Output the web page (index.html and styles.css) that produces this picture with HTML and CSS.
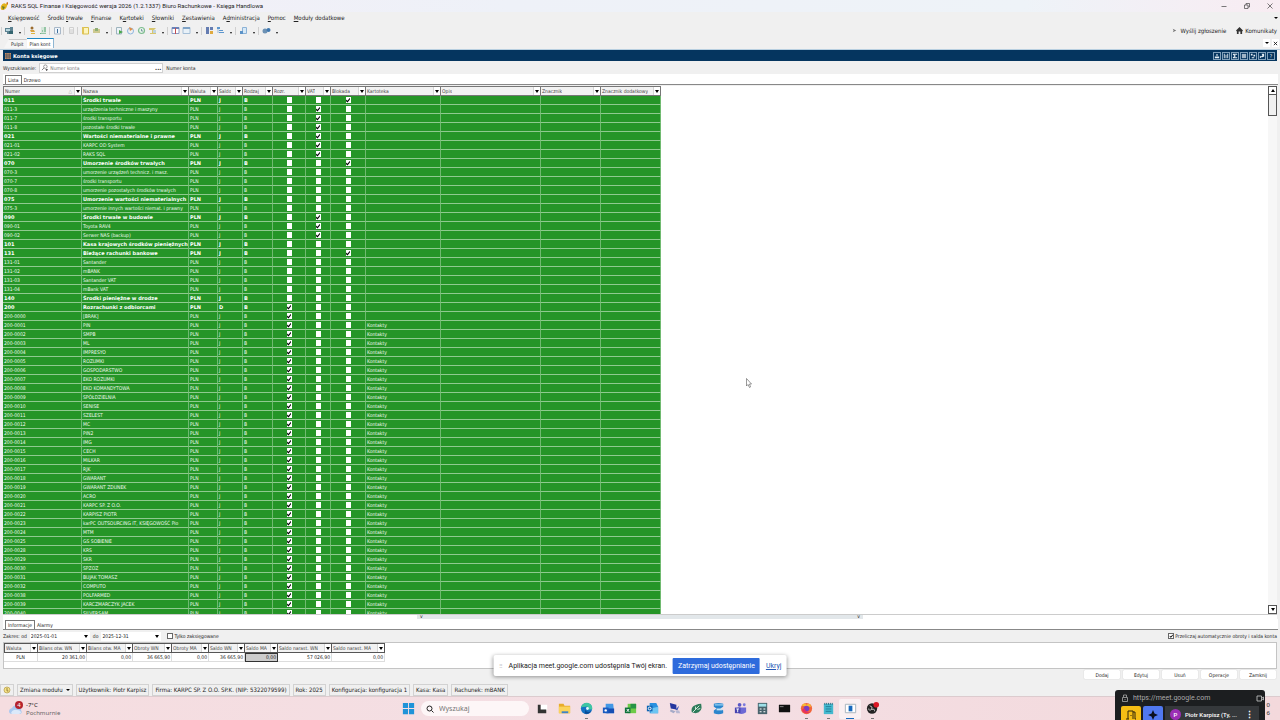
FILE: index.html
```html
<!DOCTYPE html>
<html lang="pl">
<head>
    <meta charset="UTF-8">
    <meta name="viewport" content="width=device-width, initial-scale=1.0">
    <title>RAKS SQL - Plan kont</title>
    <link rel="stylesheet" href="styles.css">
</head>
<body>
    <!-- Title bar -->
    <header class="titlebar">
        <svg class="app-icon" viewBox="0 0 9 9"><path d="M1 4 Q3 0 6 2 L8 1 L7 4 Q6 8 2 8 Q0 7 1 4Z" fill="#e2b21d"/><path d="M2 4 L5 5 L3 8Z" fill="#6b7a2a"/><path d="M6 1 L8 0 L8 3Z" fill="#c96d1b"/></svg>
        <span class="title">RAKS SQL Finanse i Księgowość wersja 2026 (1.2.1337) Biuro Rachunkowe - Księga Handlowa</span>
        <div class="window-buttons">
            <button aria-label="Minimalizuj"><svg viewBox="0 0 8 8"><path d="M1.500 4.500H6.500" stroke="#444" stroke-width=".7"/></svg></button>
            <button aria-label="Przywróć"><svg viewBox="0 0 8 8"><path d="M1.500 3H5V6.500H1.500ZM3 3V1.500H6.500V5H5" fill="none" stroke="#444" stroke-width=".7"/></svg></button>
            <button aria-label="Zamknij okno"><svg viewBox="0 0 8 8"><path d="M1.500 1.500L6.500 6.500M6.500 1.500L1.500 6.500" stroke="#444" stroke-width=".7"/></svg></button>
        </div>
    </header>

    <nav class="menu">
        <a href="#"><u>K</u>sięgowość</a>
        <a href="#">Środki <u>t</u>rwałe</a>
        <a href="#"><u>F</u>inanse</a>
        <a href="#">K<u>a</u>rtoteki</a>
        <a href="#"><u>S</u>łowniki</a>
        <a href="#"><u>Z</u>estawienia</a>
        <a href="#">A<u>d</u>ministracja</a>
        <a href="#"><u>P</u>omoc</a>
        <a href="#"><u>M</u>oduły dodatkowe</a>
        <span class="menu-more caret small"></span>
    </nav>

    <!-- Toolbar -->
    <div class="toolbar">
        <span class="sep"></span>
        <button aria-label="Moduł"><svg viewBox="0 0 9 9"><path d="M0 2H5V1H8V8H2V6H0Z" fill="#5d8291"/><path d="M1 3H5V5H1Z" fill="#b9d7df"/><path d="M4 5H8V8H4Z" fill="#34656f"/></svg></button>
        <span class="drop"></span><span class="sep"></span>
        <button aria-label="Kontrahent"><svg viewBox="0 0 9 9"><circle cx="4" cy="2" r="1.500" fill="#9b6b2d"/><path d="M2 4L6 4L7 6L3 6Z" fill="#d9a441"/><path d="M3 7H7V8H3Z" fill="#e0b43c"/></svg></button>
        <button aria-label="Wykres"><svg viewBox="0 0 9 9"><path d="M1 7H7V8H1ZM5 1H7V6H5ZM3 4H4V6H3Z" fill="#6fae86"/><path d="M2 1H7V8H2Z" fill="#b9dcc4" opacity=".5"/></svg></button>
        <span class="sep"></span>
        <button aria-label="Dokument"><svg viewBox="0 0 9 9"><path d="M1.500 1.500H7.500V8H1.500Z" fill="#eef4fa" stroke="#a9b8c8"/><path d="M4 3H5V7H4Z" fill="#3f6f9c"/></svg></button>
        <span class="sep"></span>
        <button aria-label="Kopiuj"><svg viewBox="0 0 9 9"><path d="M2.500 1.500H6.500V7.500H2.500Z" fill="#f4f4f4" stroke="#cfcfcf"/><path d="M3 4H6M3 6H6" stroke="#ccc"/></svg></button>
        <span class="sep"></span>
        <button aria-label="Notatka"><svg viewBox="0 0 9 9"><path d="M1.500 1.500H7.500V8H1.500Z" fill="#fdf5bd" stroke="#d9bf4e"/><path d="M1 1H3V8H1Z" fill="#e0c458"/></svg></button>
        <button aria-label="Rejestr"><svg viewBox="0 0 9 9"><path d="M1 3H8V7H1Z" fill="#cdc98f"/><path d="M3 2H6V5H3Z" fill="#8fae76"/></svg></button>
        <span class="drop"></span><span class="sep"></span>
        <button aria-label="Nowy"><svg viewBox="0 0 9 9"><path d="M1.500 1.500H6.500V8H1.500Z" fill="#edf3f8" stroke="#9db3bd"/><path d="M4 4L8 6L4 8Z" fill="#4aa84c"/></svg></button>
        <button aria-label="Odśwież"><svg viewBox="0 0 9 9"><circle cx="4.500" cy="5" r="3" fill="none" stroke="#8fb6e0"/><path d="M3 1L7 3L4 5Z" fill="#e18f44"/></svg></button>
        <button aria-label="Zegar"><svg viewBox="0 0 9 9"><circle cx="4.500" cy="4.500" r="3" fill="#e6f3ea" stroke="#7fbd90" stroke-width="1.200"/><path d="M4.500 3V5H6" fill="none" stroke="#578" stroke-width=".7"/></svg></button>
        <button aria-label="Waga"><svg viewBox="0 0 9 9"><path d="M1 2H8L6 4V7H8V8H2V7H4V4H1Z" fill="#d8c66d"/><path d="M5 4H8V7H5Z" fill="#bcd2df"/></svg></button>
        <span class="drop"></span><span class="sep"></span>
        <button aria-label="Tabela"><svg viewBox="0 0 9 9"><path d="M1 1.500H8V7.500H1Z" fill="#fff" stroke="#8b9dc6"/><path d="M1 1H8V3H1Z" fill="#6b82b8"/><path d="M4.500 2V8" stroke="#c44d50"/></svg></button>
        <button aria-label="Okno"><svg viewBox="0 0 9 9"><path d="M1 1.500H8V7.500H1Z" fill="#e8f1f8" stroke="#a5bfd7"/><path d="M1 1H8V3H1Z" fill="#7fa3c7"/></svg></button>
        <span class="drop"></span><span class="sep"></span>
        <button aria-label="Salda"><svg viewBox="0 0 9 9"><path d="M1 1H4V8H1ZM5 1H8V4H5Z" fill="#647cb1"/><path d="M5 5H8V8H5Z" fill="#e0aa3e"/></svg></button>
        <button aria-label="Drzewo kont"><svg viewBox="0 0 9 9"><path d="M1 1H4V3H1ZM3 4H7V5H3ZM3 6H8V7H3Z" fill="#5d96cd"/><path d="M2 3V7" stroke="#9bbbd8"/></svg></button>
        <span class="drop"></span><span class="sep"></span>
        <button aria-label="Wydruk"><svg viewBox="0 0 9 9"><path d="M3.500 1.500H7.500V7.500H3.500Z" fill="#d7e9f7" stroke="#8cb2d6"/><path d="M1 5H4V8H1Z" fill="#5b93c8"/></svg></button>
        <span class="drop"></span><span class="sep"></span>
        <button aria-label="Pomoc"><svg viewBox="0 0 9 9"><circle cx="3" cy="5" r="2.500" fill="#6d92b4"/><circle cx="6.500" cy="4" r="2" fill="#3f78b0"/></svg></button>
        <span class="drop"></span>
        <div class="toolbar-right">
            <a href="#"><svg viewBox="0 0 8 8"><path d="M2 2L6 4L2 6L3 4Z" fill="#777"/></svg>Wyślij zgłoszenie</a>
            <a href="#"><svg viewBox="0 0 8 8"><path d="M0 4L4 0L8 4L7 5V8H5V5H3V8H1V5Z" fill="#333"/></svg>Komunikaty</a>
        </div>
    </div>

    <div class="doc-tabs">
        <button class="doc-tab">Pulpit</button>
        <button class="doc-tab active">Plan kont</button>
        <div class="doc-controls">
            <button aria-label="Lista kart"><span class="caret small"></span></button>
            <button aria-label="Zamknij kartę"><svg viewBox="0 0 6 6"><path d="M1 1L5 5M5 1L1 5" stroke="#111"/></svg></button>
        </div>
    </div>

    <main class="window">
        <div class="window-header">
            <svg class="grid-icon" viewBox="0 0 7 7"><path d="M0 0H2V2H0ZM2.500 0H4.500V2H2.500ZM5 0H7V2H5ZM0 2.500H2V4.500H0ZM2.500 2.500H4.500V4.500H2.500ZM5 2.500H7V4.500H5ZM0 5H2V7H0ZM2.500 5H4.500V7H2.500ZM5 5H7V7H5Z" fill="#c98d62"/></svg>
            <h1>Konta księgowe</h1>
            <div class="header-tools">
                <button aria-label="Drukuj"><svg viewBox="0 0 7 7"><path d="M1 4H6V6H1ZM2 3L3.500 1L5 3Z"/></svg></button>
                <button aria-label="Kolumny"><svg viewBox="0 0 7 7"><path d="M1 1H2V6H1ZM3 2H4V6H3ZM5 1H6V6H5Z"/></svg></button>
                <button aria-label="Suma"><svg viewBox="0 0 7 7"><path d="M1 1H6V2H3L4.500 3.500L3 5H6V6H1V5L3 3.500L1 2Z"/></svg></button>
                <button aria-label="Siatka"><svg viewBox="0 0 7 7"><path d="M1 1H6V6H1Z" opacity=".7"/></svg></button>
                <button aria-label="Odśwież listę"><svg viewBox="0 0 7 7"><path d="M1 1H3V3H1ZM4 2H6V4H4ZM2 5H5V6H2Z"/></svg></button>
                <button aria-label="Powiększ"><svg viewBox="0 0 7 7"><path d="M1 6V3L3 5ZM3 1H6V4L4 5L2 4L4 3Z"/></svg></button>
                <button aria-label="Pomoc okna">?</button>
            </div>
        </div>

        <div class="search-row">
            <label for="search">Wyszukiwanie:</label>
            <div class="search-box">
                <svg viewBox="0 0 8 8"><circle cx="5" cy="3" r="2" fill="none" stroke="#777" stroke-width=".8"/><path d="M3.500 4.500L1 7" stroke="#777"/><path d="M5 6H8L6.500 8Z" fill="#222"/></svg>
                <input type="text" id="search" placeholder="Numer konta">
                <button aria-label="Więcej">...</button>
            </div>
            <span>Numer konta</span>
        </div>

        <div class="view-tabs">
            <button class="view-tab active">Lista</button>
            <button class="view-tab">Drzewo</button>
        </div>

        <!-- Accounts list -->
        <div class="accounts">
            <div class="accounts-scroll">
                <table class="accounts-table">
                    <colgroup>
                        <col class="c-number"><col class="c-name"><col class="c-currency"><col class="c-balance">
                        <col class="c-kind"><col class="c-settle"><col class="c-vat"><col class="c-lock">
                        <col class="c-file"><col class="c-desc"><col class="c-tag"><col class="c-tag">
                    </colgroup>
                    <thead>
                        <tr id="accountsHead"></tr>
                    </thead>
                    <tbody id="accountsBody"></tbody>
                </table>
            </div>
            <div class="scrollbar">
                <button aria-label="W górę"><span class="caret up"></span></button>
                <span class="thumb"></span>
                <button class="down" aria-label="W dół"><span class="caret"></span></button>
            </div>
        </div>
        <div class="splitter"><span class="splitter-handle"><span>v</span><span>v</span></span></div>

        <div class="view-tabs info-tabs">
            <button class="view-tab active">Informacje</button>
            <button class="view-tab">Alarmy</button>
        </div>

        <div class="range-row">
            <label for="dateFrom">Zakres: od</label>
            <select id="dateFrom"><option>2025-01-01</option></select>
            <label for="dateTo">do</label>
            <select id="dateTo"><option>2025-12-31</option></select>
            <label class="check-label"><input type="checkbox" class="check">Tylko zaksięgowane</label>
            <label class="check-label recalc"><input type="checkbox" class="check" checked>Przeliczaj automatycznie obroty i salda konta</label>
        </div>

        <div class="totals">
            <table class="totals-table">
                <colgroup>
                    <col class="t-34"><col class="t-49"><col class="t-46"><col class="t-39"><col class="t-37">
                    <col class="t-36"><col class="t-33"><col class="t-54"><col class="t-53">
                </colgroup>
                <thead>
                    <tr id="totalsHead"></tr>
                </thead>
                <tbody>
                    <tr>
                        <td class="center">PLN</td><td>20 361,00</td><td>0,00</td><td>36 665,90</td><td>0,00</td>
                        <td>36 665,90</td><td class="selected">0,00</td><td>57 026,90</td><td>0,00</td>
                    </tr>
                </tbody>
            </table>
        </div>

        <div class="actions">
            <button>Dodaj</button>
            <button>Edytuj</button>
            <button>Usuń</button>
            <button>Operacje</button>
            <button>Zamknij</button>
        </div>
    </main>

    <footer class="statusbar">
        <button class="status-item" aria-label="Podpowiedź"><svg viewBox="0 0 8 8"><circle cx="4" cy="4" r="3" fill="#f6e388" stroke="#b39a45" stroke-width=".7"/><path d="M4 2V5H5.500" fill="none" stroke="#86702e" stroke-width=".8"/></svg></button>
        <button class="status-item">Zmiana modułu <span class="caret small"></span></button>
        <span class="status-item">Użytkownik: Piotr Karpisz</span>
        <span class="status-item">Firma: KARPC SP. Z O.O. SP.K. (NIP: 5322079599)</span>
        <span class="status-item">Rok: 2025</span>
        <span class="status-item">Konfiguracja: konfiguracja 1</span>
        <span class="status-item">Kasa: Kasa</span>
        <span class="status-item">Rachunek: mBANK</span>
    </footer>

    <!-- Windows taskbar -->
    <div class="taskbar">
        <div class="weather">
            <svg viewBox="0 0 16 14"><path d="M3 13Q0 13 0 10Q0 8 3 7Q5 3 9 5Q13 6 12 9Q14 13 10 13Z" fill="#a9c9f0"/><path d="M2 12Q4 8 8 9Q12 9 12 12L10 13H3Z" fill="#dbe9fa"/><circle cx="10" cy="4" r="4" fill="#b5222c"/><text x="10" y="6" text-anchor="middle" class="badge-text">4</text></svg>
            <div><div>-7°C</div><div class="muted">Pochmurnie</div></div>
        </div>
        <div class="task-icons">
            <button aria-label="Start"><svg viewBox="0 0 16 16"><path d="M2 2H7.500V7.500H2ZM8.500 2H14V7.500H8.500ZM2 8.500H7.500V14H2ZM8.500 8.500H14V14H8.500Z" fill="#1f93d8"/></svg></button>
            <div class="task-search">
                <svg viewBox="0 0 8 8"><circle cx="3.500" cy="3.500" r="2.500" fill="none" stroke="#222"/><path d="M5.500 5.500L7.500 7.500" stroke="#222"/></svg>
                <input type="text" aria-label="Wyszukaj" placeholder="Wyszukaj">
            </div>
            <button aria-label="Widok zadań"><svg viewBox="0 0 16 16"><path d="M6 4H13V10H6Z" fill="#fff"/><path d="M3 4H6V9H12V13H3Z" fill="#333"/></svg></button>
            <button aria-label="Pliki"><svg viewBox="0 0 16 16"><path d="M2 3H7L8 5H14V13H2Z" fill="#e8ac2b"/><path d="M2 6H14V13H2Z" fill="#fbd35b"/><path d="M5 11H12V13H5Z" fill="#3f83c8"/></svg></button>
            <button class="running" aria-label="Edge"><svg viewBox="0 0 16 16"><circle cx="8" cy="8" r="6" fill="#1572c4"/><path d="M2 7Q4 1 10 2Q15 4 14 9H9Q11 5 7 6Q4 6 2 7Z" fill="#3fc6a3"/><path d="M7 9Q8 13 13 11Q10 15 6 13Z" fill="#0a4a94"/><circle cx="9" cy="8" r="1.500" fill="#e7f6fa"/></svg></button>
            <button aria-label="Word"><svg viewBox="0 0 16 16"><path d="M5 3H13L14 13H5Z" fill="#4397e5"/><path d="M6 8H14V13H6Z" fill="#164fb4"/><path d="M2 7H8V13H2Z" fill="#1a5bc0"/><circle cx="5" cy="10" r="1.300" fill="#fff"/></svg></button>
            <button aria-label="Excel"><svg viewBox="0 0 16 16"><path d="M5 3H14V13H5Z" fill="#6ecb48"/><path d="M8 3H14V8H8Z" fill="#279447"/><path d="M2 7H8V13H2Z" fill="#0e713a"/><path d="M4 8.500L6.500 11.500M6.500 8.500L4 11.500" stroke="#fff"/></svg></button>
            <button aria-label="Outlook"><svg viewBox="0 0 16 16"><path d="M5 2H12L14 6V13H5Z" fill="#2990df"/><path d="M6 8L14 6V13H6Z" fill="#6cc5f2"/><path d="M2 5H8V11H2Z" fill="#0f64b2"/><circle cx="5" cy="8" r="1.500" fill="none" stroke="#fff"/></svg></button>
            <button aria-label="Zdalny pulpit"><svg viewBox="0 0 16 16"><path d="M3 2L10 4L10 9L4 8Z" fill="#24369f"/><path d="M4 9L9 11L7 13L3 11Z" fill="#a6abc8"/><path d="M9 9L13 5L11 10Z" fill="#3c57b8"/><path d="M9 10L13 10L14 13L10 13Z" fill="#b9b9d2"/></svg></button>
            <button aria-label="KSeF"><svg viewBox="0 0 16 16"><path d="M3 12Q1 4 13 3Q15 12 7 13Z" fill="#2c7a59"/><path d="M4 12L11 5M7 9V6M9 9L12 8" stroke="#d8efe0"/></svg></button>
            <button aria-label="Baza"><svg viewBox="0 0 16 16"><path d="M3 3Q8 1 13 3V6L10 8L13 10V13Q8 15 3 13V10L6 8L3 6Z" fill="#2c86cd"/><path d="M4 3H13V5H4Z" fill="#79bde9"/><path d="M6 8H12V10H6Z" fill="#c7e4f5"/></svg></button>
            <button aria-label="Teams"><svg viewBox="0 0 16 16"><circle cx="7" cy="4" r="2" fill="#5a58c7"/><circle cx="12" cy="4" r="1.500" fill="#7b79dc"/><path d="M5 7H14V12Q10 15 6 13Z" fill="#6d69d5"/><path d="M2 7H8V13H2Z" fill="#4744b0"/><path d="M3.500 8.500H6.500M5 8.500V12" stroke="#fff"/></svg></button>
            <button aria-label="Kalkulator"><svg viewBox="0 0 16 16"><path d="M3 2H13V14H3Z" fill="#49646d"/><path d="M4 3H12V6H4Z" fill="#9fe0e8"/><path d="M5 8H7V9H5ZM9 8H11V9H9ZM5 11H7V12H5ZM9 11H11V12H9Z" fill="#fff"/></svg></button>
            <button aria-label="Terminal"><svg viewBox="0 0 16 16"><path d="M2 4H14V12H2Z" fill="#111"/><path d="M3 6H7" stroke="#888"/></svg></button>
            <button class="running" aria-label="Firefox"><svg viewBox="0 0 16 16"><circle cx="8" cy="8" r="6" fill="#f2653a"/><path d="M3 5Q5 1 8 4Q12 1 13 6L9 6Z" fill="#f7b733"/><circle cx="8" cy="8" r="3" fill="#7a3ec0"/><path d="M3 9Q5 15 12 12Q7 12 6 8Z" fill="#e7305f"/></svg></button>
            <button class="running" aria-label="Notatnik"><svg viewBox="0 0 16 16"><path d="M3 3H13V14H3Z" fill="#45b9cf"/><path d="M4 2V4M6 2V4M8 2V4M10 2V4M12 2V4" stroke="#2e6f85"/><path d="M5 6H11M5 8.500H11M5 11H11" stroke="#217f97"/></svg></button>
            <button class="running current" aria-label="RAKS"><svg viewBox="0 0 16 16"><path d="M2.500 3.500H13.500V12.500H2.500Z" fill="#fff" stroke="#a5b2bc"/><path d="M6 5H10V11H6Z" fill="#1769bd"/></svg></button>
            <button class="running" aria-label="OBS"><svg viewBox="0 0 16 16"><circle cx="7.500" cy="8" r="5.500" fill="#222"/><path d="M5 5Q9 6 7 9M7 9Q11 8 10 11M7 9Q4 11 4 8" fill="none" stroke="#ccc"/><circle cx="12" cy="4" r="3" fill="#da1725"/></svg></button>
        </div>
        <div class="clock"><div>0</div><div>6</div></div>
    </div>

    <!-- Screen sharing notice -->
    <div class="share-notice">
        <span class="grip">⠿</span>
        <span>Aplikacja meet.google.com udostępnia Twój ekran.</span>
        <button>Zatrzymaj udostępnianie</button>
        <a href="#">Ukryj</a>
    </div>

    <!-- Meet mini window -->
    <div class="meet">
        <div class="meet-url">
            <svg viewBox="0 0 8 8"><path d="M1.500 3.500H6.500V7.500H1.500ZM2.500 3V1H5.500V3M4 5V6" fill="none" stroke="#aaa" stroke-width=".8"/></svg>
            <span>https://meet.google.com</span>
            <svg viewBox="0 0 8 8"><path d="M1 2H5.500V7H1ZM6 4L7.500 3V6L6 5" fill="none" stroke="#ccc" stroke-width=".8"/></svg>
        </div>
        <div class="meet-body">
            <button class="leave" aria-label="Wyjdź"><svg viewBox="0 0 12 12"><path d="M3 10V2H8V10M1 10H4M8 3H10V10H11M6 6V7" fill="none" stroke="#30270a"/></svg></button>
            <button class="gemini" aria-label="Gemini"><svg viewBox="0 0 12 12"><path d="M6 1L7.500 4.500L11 6L7.500 7.500L6 11L4.500 7.500L1 6L4.500 4.500Z" fill="#0b1020"/></svg></button>
            <div class="person"><span class="avatar">P</span><span>Piotr Karpisz (Ty, ...</span><span class="dots">⋮</span></div>
        </div>
    </div>

    <svg class="cursor" viewBox="0 0 6 10"><path d="M.5 .5V8L2 6.500L3.500 9.500L4.500 9L3.500 6H5.500Z" fill="#fff" stroke="#555" stroke-width=".6"/></svg>

    <script src="script.js"></script>
</body>
</html>
```

FILE: styles.css
```css
* {
    box-sizing: border-box;
}
body {
    display: flex;
    flex-direction: column;
    height: 100vh;
    margin: 0;
    overflow: hidden;
    position: relative;
    background: #f0f0f0;
    color: #222;
    font-family: "DejaVu Sans Condensed", "DejaVu Sans", sans-serif;
    font-size: 5px;
    line-height: 8px;
}
button, input, select {
    margin: 0;
    padding: 0;
    border: none;
    background: none;
    color: inherit;
    font: inherit;
}
a {
    color: inherit;
    text-decoration: none;
}
svg {
    display: block;
    flex: none;
}
.caret {
    display: inline-block;
    border: 2px solid transparent;
    border-top: 3px solid #000;
    border-bottom: 0;
}
.caret.up {
    border-top: 0;
    border-bottom: 3px solid #000;
}
.caret.small {
    border-width: 2px 2px 0;
}

/* Title bar */
.titlebar {
    display: flex;
    align-items: center;
    height: 12px;
    padding: 0 6px 0 0;
    background: linear-gradient(90deg, #f3eff7, #eef1f8 40%, #eef3f8 80%, #f8ecf2);
    font-family: Roboto, sans-serif;
    font-size: 6px;
}
.app-icon {
    width: 9px;
    height: 9px;
    margin: 0 2px 0 0;
}
.window-buttons {
    display: flex;
    gap: 15px;
    margin-left: auto;
}
.window-buttons svg {
    width: 8px;
    height: 8px;
}

/* Menu and toolbar */
.menu {
    display: flex;
    align-items: center;
    gap: 8px;
    height: 12px;
    padding: 0 2px 0 8px;
    font-size: 6px;
}
.menu-more {
    margin-left: auto;
}
.toolbar {
    display: flex;
    align-items: center;
    height: 13px;
    padding-left: 1px;
}
.toolbar > button {
    width: 11px;
}
.toolbar > button svg {
    width: 9px;
    height: 9px;
    margin: auto;
}
.sep {
    width: 3px;
    height: 8px;
    border-left: 1px solid #cfcfcf;
}
.drop {
    width: 9px;
    height: 6px;
    display: flex;
    align-items: end;
    justify-content: center;
}
.drop::after {
    content: "";
    border: 1px solid transparent;
    border-top: 2px solid #111;
    border-bottom: 0;
}
.toolbar-right {
    display: flex;
    gap: 10px;
    margin-left: auto;
    padding-right: 3px;
    font-size: 6px;
}
.toolbar-right a {
    display: flex;
    align-items: center;
    gap: 2px;
}
.toolbar-right svg {
    width: 7px;
    height: 7px;
}

/* Document tabs */
.doc-tabs {
    display: flex;
    align-items: end;
    height: 13px;
    padding: 0 0 1px 4px;
    border-bottom: 1px solid #b8cfe0;
}
.doc-tab {
    height: 9px;
    padding: 0 3px 0 7px;
    border-top: 1px solid #c8c8c8;
    background: #f6f6f6;
    clip-path: polygon(5px 0, 100% 0, 100% 100%, 0 100%);
}
.doc-tab.active {
    height: 10px;
    padding: 0 3px 0 3px;
    border-top: 1px solid #1e87c4;
    border-right: 1px solid #8fb6d2;
    background: #fff;
    clip-path: none;
}
.doc-controls {
    display: flex;
    gap: 2px;
    margin: 0 1px 1px auto;
}
.doc-controls button {
    display: flex;
    align-items: center;
    justify-content: center;
    width: 7px;
    height: 8px;
    background: #fff;
}
.doc-controls svg {
    width: 5px;
    height: 5px;
}

/* Window */
.window {
    display: flex;
    flex: 1;
    flex-direction: column;
    min-height: 0;
    padding: 0 3px;
}
.window-header {
    display: flex;
    align-items: center;
    flex: none;
    gap: 2px;
    height: 11px;
    padding: 0 2px;
    background: #05355f;
    color: #fff;
}
.grid-icon {
    width: 6px;
    height: 6px;
}
h1 {
    margin: 0;
    font-family: "DejaVu Sans", sans-serif;
    font-size: 5px;
    line-height: 8px;
}
.header-tools {
    display: flex;
    gap: 1px;
    margin-left: auto;
}
.header-tools button {
    display: flex;
    align-items: center;
    justify-content: center;
    width: 8px;
    height: 8px;
    border: 1px solid #7f9fba;
    line-height: 6px;
}
.header-tools svg {
    width: 6px;
    height: 6px;
    fill: #e4edf4;
}
.search-row {
    display: flex;
    align-items: center;
    flex: none;
    gap: 3px;
    height: 13px;
}
.search-box {
    display: flex;
    align-items: center;
    width: 124px;
    height: 10px;
    padding: 0 1px;
    border: 1px solid #d0d0d0;
    background: #fff;
}
.search-box svg {
    width: 7px;
    height: 7px;
    margin-right: 2px;
}
.search-box input {
    flex: 1;
    min-width: 0;
}
.search-box input::placeholder {
    color: #777;
}
.search-box button {
    font-size: 6px;
    font-weight: bold;
    line-height: 6px;
}
.view-tabs {
    display: flex;
    align-items: end;
    flex: none;
    height: 11px;
    margin-right: -1px;
    padding-left: 2px;
    border-bottom: 1px solid #888;
    background: #fff;
}
.view-tab {
    height: 9px;
    padding: 0 2px;
}
.view-tab.active {
    border: 1px solid #777;
    border-bottom: 0;
    line-height: 8px;
}

/* Accounts list */
.accounts {
    display: flex;
    flex: 1;
    min-height: 0;
    margin-top: 1px;
    background: #fff;
}
.accounts-scroll {
    flex: 1;
    overflow: hidden;
}
table {
    border-collapse: separate;
    border-spacing: 0;
    table-layout: fixed;
}
.accounts-table {
    width: 658px;
}
.c-number { width: 79px; }
.c-name { width: 107px; }
.c-currency { width: 29px; }
.c-balance { width: 25px; }
.c-kind { width: 30px; }
.c-settle { width: 33px; }
.c-vat { width: 25px; }
.c-lock { width: 35px; }
.c-file { width: 75px; }
.c-desc { width: 100px; }
.c-tag { width: 60px; }
th, td {
    overflow: hidden;
    padding: 0 0 0 1px;
    white-space: nowrap;
    text-align: left;
}
th {
    height: 10px;
    border: 1px solid #777;
    border-left: 0;
    background: #f2f2f2;
    color: #444;
    font-weight: normal;
}
th:first-child {
    border-left: 1px solid #777;
}
.th-inner {
    display: flex;
    align-items: center;
    justify-content: space-between;
}
.th-inner .label {
    overflow: hidden;
}
.filter {
    display: flex;
    align-items: center;
    justify-content: center;
    flex: none;
    width: 7px;
    height: 8px;
    border-left: 1px solid #d5d5d5;
    background: #fff;
}
.sort {
    margin-left: auto;
    padding-right: 2px;
    color: #999;
}
.accounts-table td {
    height: 9px;
    border-right: 1px solid #6fba6f;
    border-bottom: 1px solid #8fca8f;
    background: #259527;
    color: #f0faf0;
    line-height: 8px;
}
.accounts-table .bold td {
    color: #fff;
    font-family: "DejaVu Sans", sans-serif;
    font-weight: bold;
}
.check {
    display: block;
    width: 6px;
    height: 6px;
    appearance: none;
    background: #fff;
}
.accounts-table .check-cell {
    padding: 0;
}
.accounts-table .check {
    width: 5px;
    margin: 0 auto;
}
.check:checked::before {
    content: "";
    display: block;
    width: 100%;
    height: 100%;
    background: #000;
    clip-path: polygon(12% 42%, 40% 62%, 88% 12%, 88% 42%, 40% 92%, 12% 70%);
}
.scrollbar {
    display: flex;
    flex-direction: column;
    width: 9px;
    background: #f7f7f7;
}
.scrollbar button {
    display: flex;
    align-items: center;
    justify-content: center;
    height: 9px;
    border: 1px solid #555;
    background: #fff;
}
.thumb {
    height: 21px;
    border: 1px solid #555;
    border-top: 0;
    background: #f0f0f0;
}
.scrollbar .down {
    margin-top: auto;
}
.splitter {
    flex: none;
    height: 5px;
    border-top: 1px solid #ccc;
    background: #fff;
}
.splitter-handle {
    display: flex;
    justify-content: space-between;
    width: 446px;
    height: 4px;
    margin: 0 auto;
    padding: 0 3px;
    background: #e2e7ea;
    line-height: 3px;
}

/* Bottom panel */
.range-row {
    display: flex;
    align-items: center;
    flex: none;
    gap: 3px;
    height: 12px;
}
select {
    appearance: none;
    width: 60px;
    height: 9px;
    padding-left: 1px;
    background: #fff url("data:image/svg+xml,%3Csvg xmlns='http://www.w3.org/2000/svg' viewBox='0 0 4 3'%3E%3Cpath d='M0 0H4L2 3Z'/%3E%3C/svg%3E") no-repeat right 2px center / 4px 3px;
}
.check-label {
    display: flex;
    align-items: center;
    gap: 1px;
    margin-left: 3px;
}
.check-label .check {
    border: 1px solid #666;
}
.recalc {
    margin-left: auto;
}
.totals {
    flex: none;
    height: 27px;
    border: 1px solid #c4c4c4;
    background: #fff;
}
.totals-table {
    width: 381px;
}
.t-34 { width: 34px; }
.t-49 { width: 49px; }
.t-46 { width: 46px; }
.t-39 { width: 39px; }
.t-37 { width: 37px; }
.t-36 { width: 36px; }
.t-33 { width: 33px; }
.t-54 { width: 54px; }
.t-53 { width: 53px; }
.totals-table th {
    border-color: #555;
}
.totals-table td {
    padding-right: 1px;
    border-right: 1px solid #ddd;
    border-bottom: 1px solid #ddd;
    text-align: right;
}
.totals-table .center {
    text-align: center;
}
.totals-table .selected {
    border: 1px solid #333;
    background: #ccc;
    line-height: 7px;
}
.actions {
    display: flex;
    flex: none;
    justify-content: end;
    gap: 3px;
    height: 15px;
    padding: 1px 1px 0 0;
}
.actions button {
    width: 36px;
    height: 9px;
    border-radius: 1px;
    background: #fff;
    box-shadow: 0 0 1px #aaa;
}

/* Status bar */
.statusbar {
    display: flex;
    align-items: center;
    flex: none;
    gap: 3px;
    height: 12px;
    font-size: 6px;
}
.status-item {
    display: flex;
    align-items: center;
    gap: 3px;
    height: 12px;
    padding: 0 2px;
    border: 1px solid #d2d2d2;
    white-space: nowrap;
}
.status-item svg {
    width: 8px;
    height: 8px;
}

/* Taskbar */
.taskbar {
    display: grid;
    grid-template-columns: 1fr auto 1fr;
    align-items: center;
    flex: none;
    height: 24px;
    border-top: 1px solid #dccbce;
    background: linear-gradient(90deg, #f5dde0, #f4dfe4 50%, #f3d9dc);
    font-family: "Noto Sans", sans-serif;
    font-size: 6px;
}
.weather {
    display: flex;
    gap: 1px;
    padding-left: 9px;
}
.weather svg {
    width: 16px;
    height: 14px;
}
.badge-text {
    fill: #fff;
    font-size: 6px;
}
.muted {
    color: #666;
}
.task-icons {
    display: flex;
    align-items: center;
}
.task-icons button {
    display: flex;
    align-items: center;
    justify-content: center;
    width: 22px;
    height: 20px;
    position: relative;
}
.task-icons button svg {
    width: 15px;
    height: 15px;
}
.task-search {
    display: flex;
    align-items: center;
    gap: 5px;
    width: 108px;
    height: 15px;
    margin: 0 2px;
    padding: 0 5px;
    border-radius: 8px;
    background: #fdf6f7;
    font-size: 7px;
}
.task-search svg {
    width: 8px;
    height: 8px;
}
.task-search input {
    flex: 1;
    min-width: 0;
}
.running::after {
    content: "";
    position: absolute;
    bottom: 0;
    width: 3px;
    height: 1px;
    background: #777;
}
.task-icons .current {
    border-radius: 2px;
    background: #faf0f2;
}
.current::after {
    width: 8px;
    background: #1769bd;
}
.clock {
    padding-right: 10px;
    text-align: right;
}

/* Overlays */
.share-notice {
    display: flex;
    align-items: center;
    gap: 6px;
    position: absolute;
    bottom: 44px;
    left: 50%;
    height: 21px;
    padding: 0 5px;
    border-radius: 2px;
    background: #fff;
    box-shadow: 0 1px 4px rgba(0, 0, 0, 0.4);
    font-family: Roboto, sans-serif;
    font-size: 7px;
    white-space: nowrap;
    transform: translateX(-50%);
}
.share-notice button {
    height: 16px;
    padding: 0 5px;
    border-radius: 1px;
    background: #2e6bdc;
    color: #fff;
}
.share-notice a {
    color: #2459b5;
    text-decoration: underline;
}
.grip {
    color: #bbb;
    font-size: 5px;
}
.meet {
    position: absolute;
    right: 15px;
    bottom: 0;
    width: 150px;
    height: 30px;
    overflow: hidden;
    border-radius: 3px 3px 0 0;
    background: #1c1e20;
    color: #fff;
    font-family: Roboto, sans-serif;
    font-size: 7px;
}
.meet-url {
    display: flex;
    align-items: center;
    gap: 4px;
    height: 16px;
    padding: 0 1px 0 6px;
    color: #aaa;
}
.meet-url svg {
    width: 8px;
    height: 8px;
}
.meet-url span {
    flex: 1;
}
.meet-body {
    display: flex;
    gap: 2px;
    padding: 0 6px;
}
.meet-body button {
    width: 20px;
    height: 18px;
    border-radius: 2px;
}
.meet-body svg {
    width: 12px;
    height: 12px;
    margin: 0 auto;
}
.leave {
    background: #f5bd14;
}
.gemini {
    background: #5078f0;
}
.person {
    display: flex;
    align-items: center;
    gap: 4px;
    flex: 1;
    height: 17px;
    padding: 0 5px;
    background: #35383b;
    font-size: 6px;
    font-weight: 500;
    white-space: nowrap;
}
.avatar {
    width: 11px;
    height: 11px;
    border-radius: 50%;
    background: #9c2fb5;
    line-height: 11px;
    text-align: center;
}
.dots {
    margin-left: auto;
    font-size: 9px;
    font-weight: bold;
}
.cursor {
    position: absolute;
    top: 378px;
    left: 746px;
    width: 6px;
    height: 10px;
}
```

FILE: script.js
```js
const headers = ['Numer', 'Nazwa', 'Waluta', 'Saldo', 'Rodzaj', 'Rozr.', 'VAT', 'Blokada', 'Kartoteka', 'Opis', 'Znacznik', 'Znacznik dodatkowy'];
const totalHeaders = ['Waluta', 'Bilans otw. WN', 'Bilans otw. MA', 'Obroty WN', 'Obroty MA', 'Saldo WN', 'Saldo MA', 'Saldo narast. WN', 'Saldo narast. MA'];

// number, name, flags: b = bold, r = Rozr., v = VAT, l = Blokada, k = Kontakty
const accounts = [
    ['011', 'Środki trwałe', 'bl'],
    ['011-3', 'urządzenia techniczne i maszyny', 'v'],
    ['011-7', 'środki transportu', 'v'],
    ['011-8', 'pozostałe środki trwałe', 'v'],
    ['021', 'Wartości niematerialne i prawne', 'bv'],
    ['021-01', 'KARPC OD System', 'v'],
    ['021-02', 'RAKS SQL', 'v'],
    ['070', 'Umorzenie środków trwałych', 'bl'],
    ['070-3', 'umorzenie urządzeń technicz. i masz.', ''],
    ['070-7', 'środki transportu', ''],
    ['070-8', 'umorzenie pozostałych środków trwałych', ''],
    ['075', 'Umorzenie wartości niematerialnych', 'b'],
    ['075-3', 'umorzenie innych wartości niemat. i prawny', ''],
    ['090', 'Środki trwałe w budowie', 'bv'],
    ['090-01', 'Toyota RAV4', 'v'],
    ['090-02', 'Serwer NAS (backup)', 'v'],
    ['101', 'Kasa krajowych środków pieniężnych', 'b'],
    ['131', 'Bieżące rachunki bankowe', 'bl'],
    ['131-01', 'Santander', ''],
    ['131-02', 'mBANK', ''],
    ['131-03', 'Santander VAT', ''],
    ['131-04', 'mBank VAT', ''],
    ['140', 'Środki pieniężne w drodze', 'b'],
    ['200', 'Rozrachunki z odbiorcami', 'br'],
    ['200-0000', '[BRAK]', 'r'],
    ['200-0001', 'PIN', 'rk'],
    ['200-0002', 'SMPB', 'rk'],
    ['200-0003', 'ML', 'rk'],
    ['200-0004', 'IMPRESYO', 'rk'],
    ['200-0005', 'ROZUMKI', 'rk'],
    ['200-0006', 'GOSPODARSTWO', 'rk'],
    ['200-0007', 'EKO ROZUMKI', 'rk'],
    ['200-0008', 'EKO KOMANDYTOWA', 'rk'],
    ['200-0009', 'SPÓŁDZIELNIA', 'rk'],
    ['200-0010', 'SENISE', 'rk'],
    ['200-0011', 'SZELEST', 'rk'],
    ['200-0012', 'MC', 'rk'],
    ['200-0013', 'PIN2', 'rk'],
    ['200-0014', 'IMG', 'rk'],
    ['200-0015', 'CECH', 'rk'],
    ['200-0016', 'MILKAR', 'rk'],
    ['200-0017', 'RJK', 'rk'],
    ['200-0018', 'GWARANT', 'rk'],
    ['200-0019', 'GWARANT ZDUNEK', 'rk'],
    ['200-0020', 'ACRO', 'rk'],
    ['200-0021', 'KARPC SP. Z O.O.', 'rk'],
    ['200-0022', 'KARPISZ PIOTR', 'rk'],
    ['200-0023', 'karPC OUTSOURCING IT, KSIĘGOWOŚĆ Pio', 'rk'],
    ['200-0024', 'MTM', 'rk'],
    ['200-0025', 'GS SOBIENIE', 'rk'],
    ['200-0028', 'KRS', 'rk'],
    ['200-0029', 'SKR', 'rk'],
    ['200-0030', 'SPZOZ', 'rk'],
    ['200-0031', 'BUJAK TOMASZ', 'rk'],
    ['200-0032', 'COMPUTO', 'rk'],
    ['200-0038', 'POLFARMED', 'rk'],
    ['200-0039', 'KARCZMARCZYK JACEK', 'rk'],
    ['200-0040', 'SILVERSAM', 'rk']
];

function headerCell(text) {
    const sort = text === 'Numer' ? '<span class="sort">△</span>' : '';
    return `<th><div class="th-inner"><span class="label">${text}</span>${sort}<button class="filter" aria-label="Filtr ${text}"><span class="caret"></span></button></div></th>`;
}

function checkCell(label, checked) {
    return `<td class="check-cell"><input type="checkbox" class="check" aria-label="${label}" ${checked ? 'checked' : ''}></td>`;
}

document.getElementById('accountsHead').innerHTML = headers.map(headerCell).join('');
document.getElementById('totalsHead').innerHTML = totalHeaders.map(headerCell).join('');

document.getElementById('accountsBody').innerHTML = accounts.map(([number, name, flags]) => `
    <tr class="${flags.includes('b') ? 'bold' : ''}">
        <td>${number}</td>
        <td>${name}</td>
        <td>PLN</td>
        <td>${number === '200' ? 'D' : 'J'}</td>
        <td>B</td>
        ${checkCell('Rozr. ' + number, flags.includes('r'))}
        ${checkCell('VAT ' + number, flags.includes('v'))}
        ${checkCell('Blokada ' + number, flags.includes('l'))}
        <td>${flags.includes('k') ? 'Kontakty' : ''}</td>
        <td></td>
        <td></td>
        <td></td>
    </tr>`).join('');
```
